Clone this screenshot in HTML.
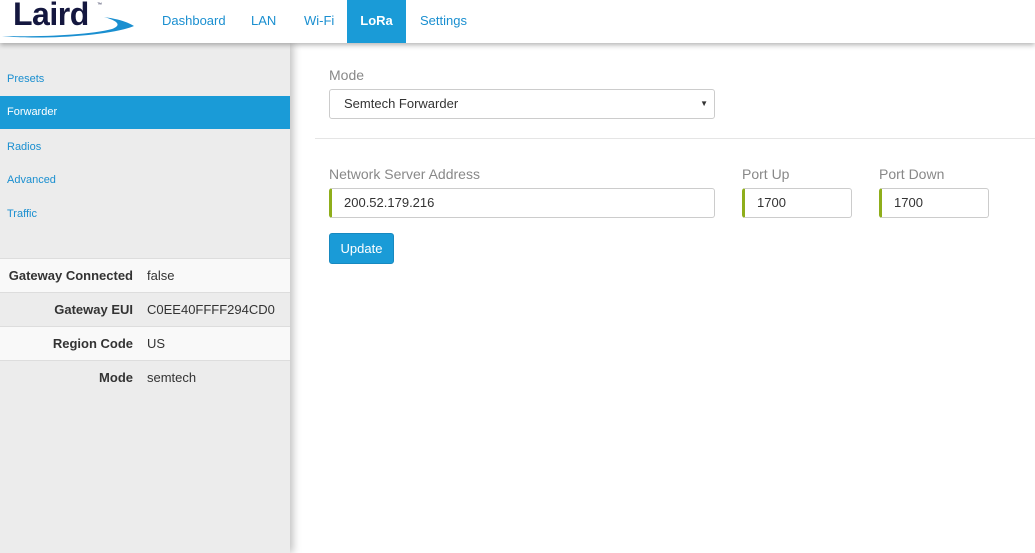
<!DOCTYPE html>
<html><head><style>
*{box-sizing:border-box;margin:0;padding:0}
body{width:1035px;height:553px;overflow:hidden;background:#fff;font-family:"Liberation Sans",Arial,sans-serif;position:relative}
.hdr{position:absolute;left:0;top:0;width:1035px;height:43px;background:#fff;box-shadow:0 2px 5px rgba(0,0,0,.3);z-index:3}
.nav{position:absolute;top:0;height:43px;line-height:41px;font-size:13px;color:#1a8fd0}
.side{position:absolute;left:0;top:43px;width:290px;height:510px;background:#ececec;box-shadow:3px 0 8px rgba(0,0,0,.25);z-index:2}
.si{position:absolute;left:0;width:290px;height:33px;line-height:33px;padding-left:7px;font-size:11px;color:#1a8fd0}
.row{position:absolute;left:0;width:290px;height:34px;border-top:1px solid #ddd;font-size:13px;line-height:33px;color:#333}
.row b{position:absolute;right:157px;font-weight:bold}
.row span{position:absolute;left:147px}
.lbl{position:absolute;font-size:14px;color:#888}
.inp{position:absolute;height:30px;border:1px solid #ccc;border-left:3px solid #8fae1b;border-radius:3px;font-size:13px;color:#333;line-height:28px;padding-left:12px}
</style></head><body>
<div class="hdr">
<div style="position:absolute;left:13px;top:-4px;font-size:32px;font-weight:bold;color:#14173f;letter-spacing:-0.5px">Laird</div>
<div style="position:absolute;left:97px;top:2px;font-size:5px;color:#14173f">™</div>
<svg style="position:absolute;left:0;top:16px" width="140" height="24"><path d="M2 20 C40 24 110 20 134 10 C128 6 118 3 104 1 C118 5 122 9 112 13 C90 19 40 21 2 20Z" fill="#1a8fd0"/></svg>
<div class="nav" style="left:162px">Dashboard</div>
<div class="nav" style="left:251px">LAN</div>
<div class="nav" style="left:304px">Wi-Fi</div>
<div class="nav" style="left:347px;width:59px;background:#1a9bd7;color:#fff;font-weight:bold;text-align:center;height:43px">LoRa</div>
<div class="nav" style="left:420px">Settings</div>
</div>
<div class="side">
<div class="si" style="top:20px">Presets</div>
<div class="si" style="top:53px;background:#1a9bd7;color:#fff">Forwarder</div>
<div class="si" style="top:88px">Radios</div>
<div class="si" style="top:121px">Advanced</div>
<div class="si" style="top:155px">Traffic</div>
<div class="row" style="top:215px;background:#f9f9f9"><b>Gateway Connected</b><span>false</span></div>
<div class="row" style="top:249px"><b>Gateway EUI</b><span>C0EE40FFFF294CD0</span></div>
<div class="row" style="top:283px;background:#f9f9f9"><b>Region Code</b><span>US</span></div>
<div class="row" style="top:317px"><b>Mode</b><span>semtech</span></div>
</div>
<div class="lbl" style="left:329px;top:67px">Mode</div>
<div style="position:absolute;left:329px;top:89px;width:386px;height:30px;border:1px solid #ccc;border-radius:3px;font-size:13px;color:#333;line-height:28px;padding-left:14px">Semtech Forwarder<span style="position:absolute;right:6px;font-size:8px">▼</span></div>
<div style="position:absolute;left:315px;top:138px;width:720px;border-top:1px solid #e5e5e5"></div>
<div class="lbl" style="left:329px;top:166px">Network Server Address</div>
<div class="lbl" style="left:742px;top:166px">Port Up</div>
<div class="lbl" style="left:879px;top:166px">Port Down</div>
<div class="inp" style="left:329px;top:188px;width:386px">200.52.179.216</div>
<div class="inp" style="left:742px;top:188px;width:110px">1700</div>
<div class="inp" style="left:879px;top:188px;width:110px">1700</div>
<div style="position:absolute;left:329px;top:233px;width:65px;height:31px;background:#1a9bd7;border:1px solid #1789c0;border-radius:3px;color:#fff;font-size:13px;line-height:29px;text-align:center">Update</div>
</body></html>
